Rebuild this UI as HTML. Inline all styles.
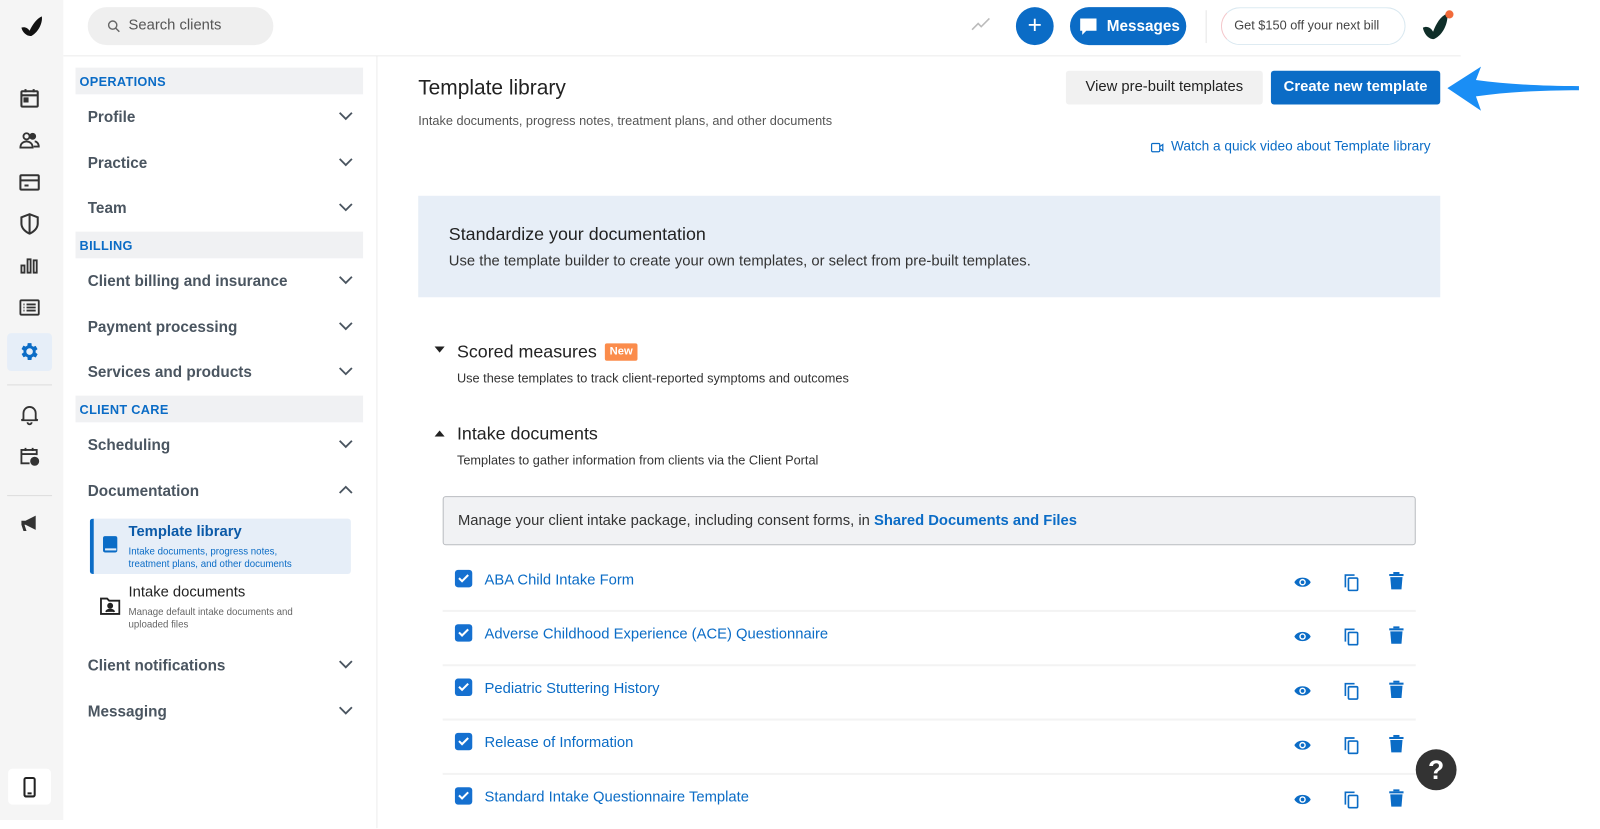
<!DOCTYPE html>
<html><head><meta charset="utf-8"><style>
*{box-sizing:border-box;margin:0;padding:0}
body{width:1600px;height:808px;overflow:hidden;background:#fff;font-family:"Liberation Sans",Arial,sans-serif;position:relative;color:#222}
#w{position:absolute;left:0;top:0;width:1570px;height:788px;transform:scale(1.02,1.025);transform-origin:0 0}
.abs{position:absolute}
.rail{left:0;top:0;width:62px;height:800px;background:#f5f5f5}
.ri{position:absolute;left:18px;width:22px;height:22px}
.side{left:62px;top:54px;width:308px;height:754px;border-right:1px solid #ececec}
.sec{position:absolute;left:12px;width:282px;height:26px;background:#f0f1f3;color:#0b6cc6;font-size:12.5px;font-weight:bold;padding:7px 4px;letter-spacing:.3px}
.item{position:absolute;left:24px;width:260px;font-size:15px;color:#4a5560;font-weight:bold}
.item svg{position:absolute;right:0;top:2px}
.link{color:#0b6cc6}
.row{position:absolute;left:434px;width:954px;height:53px;border-bottom:2px solid #f3f3f3}
.cb{position:absolute;left:12px;top:12px;width:17px;height:17px;background:#1570d0;border-radius:3px}
.row .t{position:absolute;left:41px;top:14px;font-size:14.5px;color:#0b6cc6}
</style></head><body><div id="w">
<div class="abs rail"></div>
<svg class="abs" style="left:19px;top:15px" width="24" height="22" viewBox="0 0 24 22"><path d="M2 12c3-1 6 0 8 3 3-6 7-12 12-14 1 6-3 15-10 19-4 1-9-3-10-8z" fill="#111"/></svg>
<svg class="ri" style="top:85px" viewBox="0 0 22 22" fill="none" stroke="#333" stroke-width="2"><rect x="3" y="4" width="16" height="15" rx="1"/><path d="M3 8h16M7 2v3M15 2v3"/><rect x="6" y="11" width="3" height="3" fill="#333"/></svg>
<svg class="ri" style="top:126px" viewBox="0 0 22 22" fill="none" stroke="#333" stroke-width="1.8"><circle cx="8" cy="7" r="3"/><path d="M2 18c0-4 3-6 6-6s6 2 6 6z"/><circle cx="14" cy="7" r="2.5" fill="#333"/><path d="M15 17h5c0-3-2-5-4-5"/></svg>
<svg class="ri" style="top:167px" viewBox="0 0 22 22" fill="none" stroke="#333" stroke-width="2"><rect x="2" y="4" width="18" height="14" rx="1"/><path d="M2 9h18M6 14h4"/></svg>
<svg class="ri" style="top:207px" viewBox="0 0 22 22" fill="none" stroke="#333" stroke-width="2"><path d="M11 2l8 3v6c0 5-4 8-8 10-4-2-8-5-8-10V5z"/><path d="M11 3v17"/></svg>
<svg class="ri" style="top:248px" viewBox="0 0 22 22" fill="none" stroke="#333" stroke-width="1.8"><rect x="3" y="11" width="3" height="7"/><rect x="9" y="5" width="3" height="13"/><rect x="15" y="6" width="3" height="12"/></svg>
<svg class="ri" style="top:289px" viewBox="0 0 22 22" fill="none" stroke="#333" stroke-width="1.8"><rect x="2" y="4" width="18" height="14" rx="1"/><path d="M5 8h1M8 8h9M5 11h1M8 11h9M5 14h1M8 14h9"/></svg>
<div class="abs" style="left:7px;top:325px;width:44px;height:37px;background:#e6eef8;border-radius:4px"></div>
<svg class="ri" style="top:332px" viewBox="0 0 24 24"><path fill="#0b6cc6" d="M19.4 13a7.5 7.5 0 000-2l2.1-1.6-2-3.5-2.5 1a7 7 0 00-1.7-1L15 3h-4l-.4 2.7a7 7 0 00-1.7 1l-2.5-1-2 3.5L6.6 11a7.5 7.5 0 000 2l-2.1 1.6 2 3.5 2.5-1a7 7 0 001.7 1L11 21h4l.4-2.7a7 7 0 001.7-1l2.5 1 2-3.5zM13 15.5a3.5 3.5 0 110-7 3.5 3.5 0 010 7z" transform="translate(-1 0)"/></svg>
<div class="abs" style="left:7px;top:375px;width:44px;height:1px;background:#ddd"></div>
<svg class="ri" style="top:393px" viewBox="0 0 22 22" fill="none" stroke="#333" stroke-width="1.8"><path d="M5 16V10a6 6 0 0112 0v6l2 1H3z"/><path d="M9 19a2 2 0 004 0"/></svg>
<svg class="ri" style="top:434px" viewBox="0 0 22 22" fill="none" stroke="#333" stroke-width="1.8"><path d="M11 18H3V5h15v5M3 9h15M7 3v3M14 3v3"/><circle cx="16" cy="16" r="3.5" fill="#333"/></svg>
<div class="abs" style="left:7px;top:483px;width:44px;height:1px;background:#ddd"></div>
<svg class="ri" style="top:499px" viewBox="0 0 22 22"><path fill="#333" d="M3 9h4l10-5v14L7 13H6l2 6H5l-2-6z"/></svg>
<div class="abs" style="left:8px;top:750px;width:42px;height:35px;background:#fff;border-radius:4px"></div>
<svg class="ri" style="top:757px" viewBox="0 0 22 22" fill="none" stroke="#222" stroke-width="2"><rect x="6" y="2" width="10" height="18" rx="1.5"/><path d="M9 17h4"/></svg>

<div class="abs" style="left:62px;top:54px;width:1370px;height:1px;background:#ececec"></div>
<div class="abs" style="left:86px;top:7px;width:182px;height:37px;background:#efefef;border-radius:19px"></div>
<svg class="abs" style="left:105px;top:19px" width="13" height="13" viewBox="0 0 13 13" fill="none" stroke="#666" stroke-width="1.4"><circle cx="5.5" cy="5.5" r="4"/><path d="M8.5 8.5l3.5 3.5"/></svg>
<div class="abs" style="left:126px;top:17px;font-size:14.5px;color:#555">Search clients</div>
<svg class="abs" style="left:952px;top:17px" width="20" height="14" viewBox="0 0 20 14" fill="none" stroke="#bbb" stroke-width="1.6"><path d="M1 12l6-6 3 3 8-8"/></svg>
<div class="abs" style="left:996px;top:7px;width:37px;height:37px;border-radius:50%;background:#0b6cc6;color:#fff;font-size:24px;text-align:center;line-height:35px">+</div>
<div class="abs" style="left:1049px;top:7px;width:114px;height:37px;border-radius:19px;background:#0b6cc6"></div>
<svg class="abs" style="left:1057px;top:16px" width="20" height="20" viewBox="0 0 20 20"><path fill="#fff" d="M2 2h16v12H8l-4 4v-4H2z"/></svg>
<div class="abs" style="left:1085px;top:17px;font-size:15px;font-weight:bold;color:#fff">Messages</div>
<div class="abs" style="left:1182px;top:10px;width:1px;height:32px;background:#e6e6e6"></div>
<div class="abs" style="left:1197px;top:7px;width:181px;height:37px;border-radius:19px;border:1px solid #d9e8f0;border-left-color:#f4c7cb"></div>
<div class="abs" style="left:1210px;top:18px;font-size:12.5px;color:#444">Get $150 off your next bill</div>
<svg class="abs" style="left:1393px;top:9px" width="34" height="32" viewBox="0 0 34 32"><path d="M2 18c4-2 8 0 10 4 3-8 7-15 14-18 1 9-4 21-13 25-5 1-10-5-11-11z" fill="#0f2e29"/><circle cx="28" cy="5" r="4" fill="#f26b3a"/></svg>

<div class="abs side">
<div class="sec" style="top:12px">OPERATIONS</div>
<div class="item" style="top:52px">Profile<svg width="14" height="10" viewBox="0 0 14 10" fill="none" stroke="#4a5560" stroke-width="1.8"><path d="M1 2l6 6 6-6"/></svg></div>
<div class="item" style="top:97px">Practice<svg width="14" height="10" viewBox="0 0 14 10" fill="none" stroke="#4a5560" stroke-width="1.8"><path d="M1 2l6 6 6-6"/></svg></div>
<div class="item" style="top:141px">Team<svg width="14" height="10" viewBox="0 0 14 10" fill="none" stroke="#4a5560" stroke-width="1.8"><path d="M1 2l6 6 6-6"/></svg></div>
<div class="sec" style="top:172px">BILLING</div>
<div class="item" style="top:212px">Client billing and insurance<svg width="14" height="10" viewBox="0 0 14 10" fill="none" stroke="#4a5560" stroke-width="1.8"><path d="M1 2l6 6 6-6"/></svg></div>
<div class="item" style="top:257px">Payment processing<svg width="14" height="10" viewBox="0 0 14 10" fill="none" stroke="#4a5560" stroke-width="1.8"><path d="M1 2l6 6 6-6"/></svg></div>
<div class="item" style="top:301px">Services and products<svg width="14" height="10" viewBox="0 0 14 10" fill="none" stroke="#4a5560" stroke-width="1.8"><path d="M1 2l6 6 6-6"/></svg></div>
<div class="sec" style="top:332px">CLIENT CARE</div>
<div class="item" style="top:372px">Scheduling<svg width="14" height="10" viewBox="0 0 14 10" fill="none" stroke="#4a5560" stroke-width="1.8"><path d="M1 2l6 6 6-6"/></svg></div>
<div class="item" style="top:417px">Documentation<svg width="14" height="10" viewBox="0 0 14 10" fill="none" stroke="#4a5560" stroke-width="1.8"><path d="M1 8l6-6 6 6"/></svg></div>
<div class="abs" style="left:26px;top:452px;width:256px;height:54px;background:#e6eef8;border-left:4px solid #0b6cc6;border-radius:3px"></div>
<svg class="abs" style="left:38px;top:468px" width="16" height="18" viewBox="0 0 16 18"><rect x="1" y="1" width="14" height="16" rx="2" fill="#0b6cc6"/><rect x="3" y="13" width="11" height="2" fill="#e6eef8"/></svg>
<div class="abs" style="left:64px;top:457px;font-size:14.5px;font-weight:bold;color:#0b5aa8">Template library</div>
<div class="abs" style="left:64px;top:479px;font-size:9.5px;line-height:12px;color:#0b6cc6">Intake documents, progress notes,<br>treatment plans, and other documents</div>
<svg class="abs" style="left:36px;top:528px" width="20" height="18" viewBox="0 0 20 18" fill="none" stroke="#222" stroke-width="1.8"><path d="M1 2h6l2 2h10v13H1z"/><circle cx="10" cy="9" r="2" fill="#222"/><path d="M6 15c1-3 7-3 8 0" fill="#222"/></svg>
<div class="abs" style="left:64px;top:516px;font-size:14.5px;color:#222">Intake documents</div>
<div class="abs" style="left:64px;top:538px;font-size:9.5px;line-height:12px;color:#666">Manage default intake documents and<br>uploaded files</div>
<div class="item" style="top:587px">Client notifications<svg width="14" height="10" viewBox="0 0 14 10" fill="none" stroke="#4a5560" stroke-width="1.8"><path d="M1 2l6 6 6-6"/></svg></div>
<div class="item" style="top:632px">Messaging<svg width="14" height="10" viewBox="0 0 14 10" fill="none" stroke="#4a5560" stroke-width="1.8"><path d="M1 2l6 6 6-6"/></svg></div>
</div>

<div class="abs" style="left:410px;top:74px;font-size:20.5px;color:#222">Template library</div>
<div class="abs" style="left:410px;top:111px;font-size:12.5px;color:#555">Intake documents, progress notes, treatment plans, and other documents</div>
<div class="abs" style="left:1045px;top:69px;width:193px;height:33px;background:#f1f1f1;border-radius:3px;font-size:14.5px;color:#222;text-align:center;line-height:33px">View pre-built templates</div>
<div class="abs" style="left:1246px;top:69px;width:166px;height:33px;background:#0b6cc6;border-radius:3px;font-size:14.5px;font-weight:bold;color:#fff;text-align:center;line-height:33px">Create new template</div>
<svg class="abs" style="left:1418px;top:62px" width="132" height="48" viewBox="0 0 132 48"><path d="M1 24L34 3l-5 13c30 4 62 6 101 6v4c-39 0-71 2-101 6l5 14z" fill="#1a8ef5"/></svg>
<svg class="abs" style="left:1128px;top:139px" width="13" height="10" viewBox="0 0 13 10" fill="none" stroke="#0b6cc6" stroke-width="1.2"><rect x="1" y="1" width="8" height="8" rx="1"/><path d="M9 4l3-2v6l-3-2"/></svg>
<div class="abs link" style="left:1148px;top:135px;font-size:13.4px">Watch a quick video about Template library</div>

<div class="abs" style="left:410px;top:191px;width:1002px;height:99px;background:#e7eef7"></div>
<div class="abs" style="left:440px;top:218px;font-size:17.5px;color:#222">Standardize your documentation</div>
<div class="abs" style="left:440px;top:247px;font-size:14.5px;color:#333">Use the template builder to create your own templates, or select from pre-built templates.</div>

<svg class="abs" style="left:426px;top:338px" width="10" height="7" viewBox="0 0 10 7"><path d="M0 0h10L5 6z" fill="#222"/></svg>
<div class="abs" style="left:448px;top:333px;font-size:17.5px;color:#222">Scored measures</div>
<div class="abs" style="left:593px;top:335px;width:32px;height:17px;background:#fb8c4b;border-radius:2px;color:#fff;font-size:11px;font-weight:bold;text-align:center;line-height:17px">New</div>
<div class="abs" style="left:448px;top:362px;font-size:12.5px;color:#333">Use these templates to track client-reported symptoms and outcomes</div>

<svg class="abs" style="left:426px;top:419px" width="10" height="7" viewBox="0 0 10 7"><path d="M0 7h10L5 1z" fill="#222"/></svg>
<div class="abs" style="left:448px;top:413px;font-size:17.5px;color:#222">Intake documents</div>
<div class="abs" style="left:448px;top:442px;font-size:12.5px;color:#333">Templates to gather information from clients via the Client Portal</div>

<div class="abs" style="left:434px;top:484px;width:954px;height:48px;background:#f1f2f4;border:1px solid #b9bcc0;border-radius:3px"></div>
<div class="abs" style="left:449px;top:500px;font-size:14.5px;color:#333">Manage your client intake package, including consent forms, in <b class="link">Shared Documents and Files</b></div>

<div class="row" style="top:544px"><div class="cb"></div><svg class="abs" style="left:15px;top:16px" width="11" height="9" viewBox="0 0 11 9" fill="none" stroke="#fff" stroke-width="2"><path d="M1 4l3 3 6-6"/></svg><div class="t">ABA Child Intake Form</div></div>
<div class="row" style="top:597px"><div class="cb"></div><svg class="abs" style="left:15px;top:16px" width="11" height="9" viewBox="0 0 11 9" fill="none" stroke="#fff" stroke-width="2"><path d="M1 4l3 3 6-6"/></svg><div class="t">Adverse Childhood Experience (ACE) Questionnaire</div></div>
<div class="row" style="top:650px"><div class="cb"></div><svg class="abs" style="left:15px;top:16px" width="11" height="9" viewBox="0 0 11 9" fill="none" stroke="#fff" stroke-width="2"><path d="M1 4l3 3 6-6"/></svg><div class="t">Pediatric Stuttering History</div></div>
<div class="row" style="top:703px"><div class="cb"></div><svg class="abs" style="left:15px;top:16px" width="11" height="9" viewBox="0 0 11 9" fill="none" stroke="#fff" stroke-width="2"><path d="M1 4l3 3 6-6"/></svg><div class="t">Release of Information</div></div>
<div class="row" style="top:756px;border:none"><div class="cb"></div><svg class="abs" style="left:15px;top:16px" width="11" height="9" viewBox="0 0 11 9" fill="none" stroke="#fff" stroke-width="2"><path d="M1 4l3 3 6-6"/></svg><div class="t">Standard Intake Questionnaire Template</div></div>

<svg width="0" height="0" style="position:absolute"><defs>
<g id="eye"><path d="M1 7C4 1 14 1 17 7 14 13 4 13 1 7z" fill="#0b6cc6"/><circle cx="9" cy="7" r="3.2" fill="#fff"/><circle cx="9" cy="7" r="1.8" fill="#0b6cc6"/></g>
<g id="cp" fill="none" stroke="#0b6cc6" stroke-width="1.6"><path d="M2 14V2h9"/><rect x="5" y="5" width="9" height="12" rx="1"/></g>
<g id="tr" fill="#0b6cc6"><rect x="1" y="2" width="14" height="2"/><rect x="5" y="0" width="6" height="2"/><path d="M2 5h12l-1 12H3z"/></g>
</defs></svg>
<svg class="abs" style="left:1268px;top:561px" width="18" height="14"><use href="#eye"/></svg>
<svg class="abs" style="left:1317px;top:559px" width="16" height="18"><use href="#cp"/></svg>
<svg class="abs" style="left:1361px;top:558px" width="16" height="18"><use href="#tr"/></svg>
<svg class="abs" style="left:1268px;top:614px" width="18" height="14"><use href="#eye"/></svg>
<svg class="abs" style="left:1317px;top:612px" width="16" height="18"><use href="#cp"/></svg>
<svg class="abs" style="left:1361px;top:611px" width="16" height="18"><use href="#tr"/></svg>
<svg class="abs" style="left:1268px;top:667px" width="18" height="14"><use href="#eye"/></svg>
<svg class="abs" style="left:1317px;top:665px" width="16" height="18"><use href="#cp"/></svg>
<svg class="abs" style="left:1361px;top:664px" width="16" height="18"><use href="#tr"/></svg>
<svg class="abs" style="left:1268px;top:720px" width="18" height="14"><use href="#eye"/></svg>
<svg class="abs" style="left:1317px;top:718px" width="16" height="18"><use href="#cp"/></svg>
<svg class="abs" style="left:1361px;top:717px" width="16" height="18"><use href="#tr"/></svg>
<svg class="abs" style="left:1268px;top:773px" width="18" height="14"><use href="#eye"/></svg>
<svg class="abs" style="left:1317px;top:771px" width="16" height="18"><use href="#cp"/></svg>
<svg class="abs" style="left:1361px;top:770px" width="16" height="18"><use href="#tr"/></svg>

<div class="abs" style="left:1388px;top:731px;width:40px;height:40px;border-radius:50%;background:#333;color:#fff;font-size:26px;font-weight:bold;text-align:center;line-height:40px">?</div>
</div></body></html>
